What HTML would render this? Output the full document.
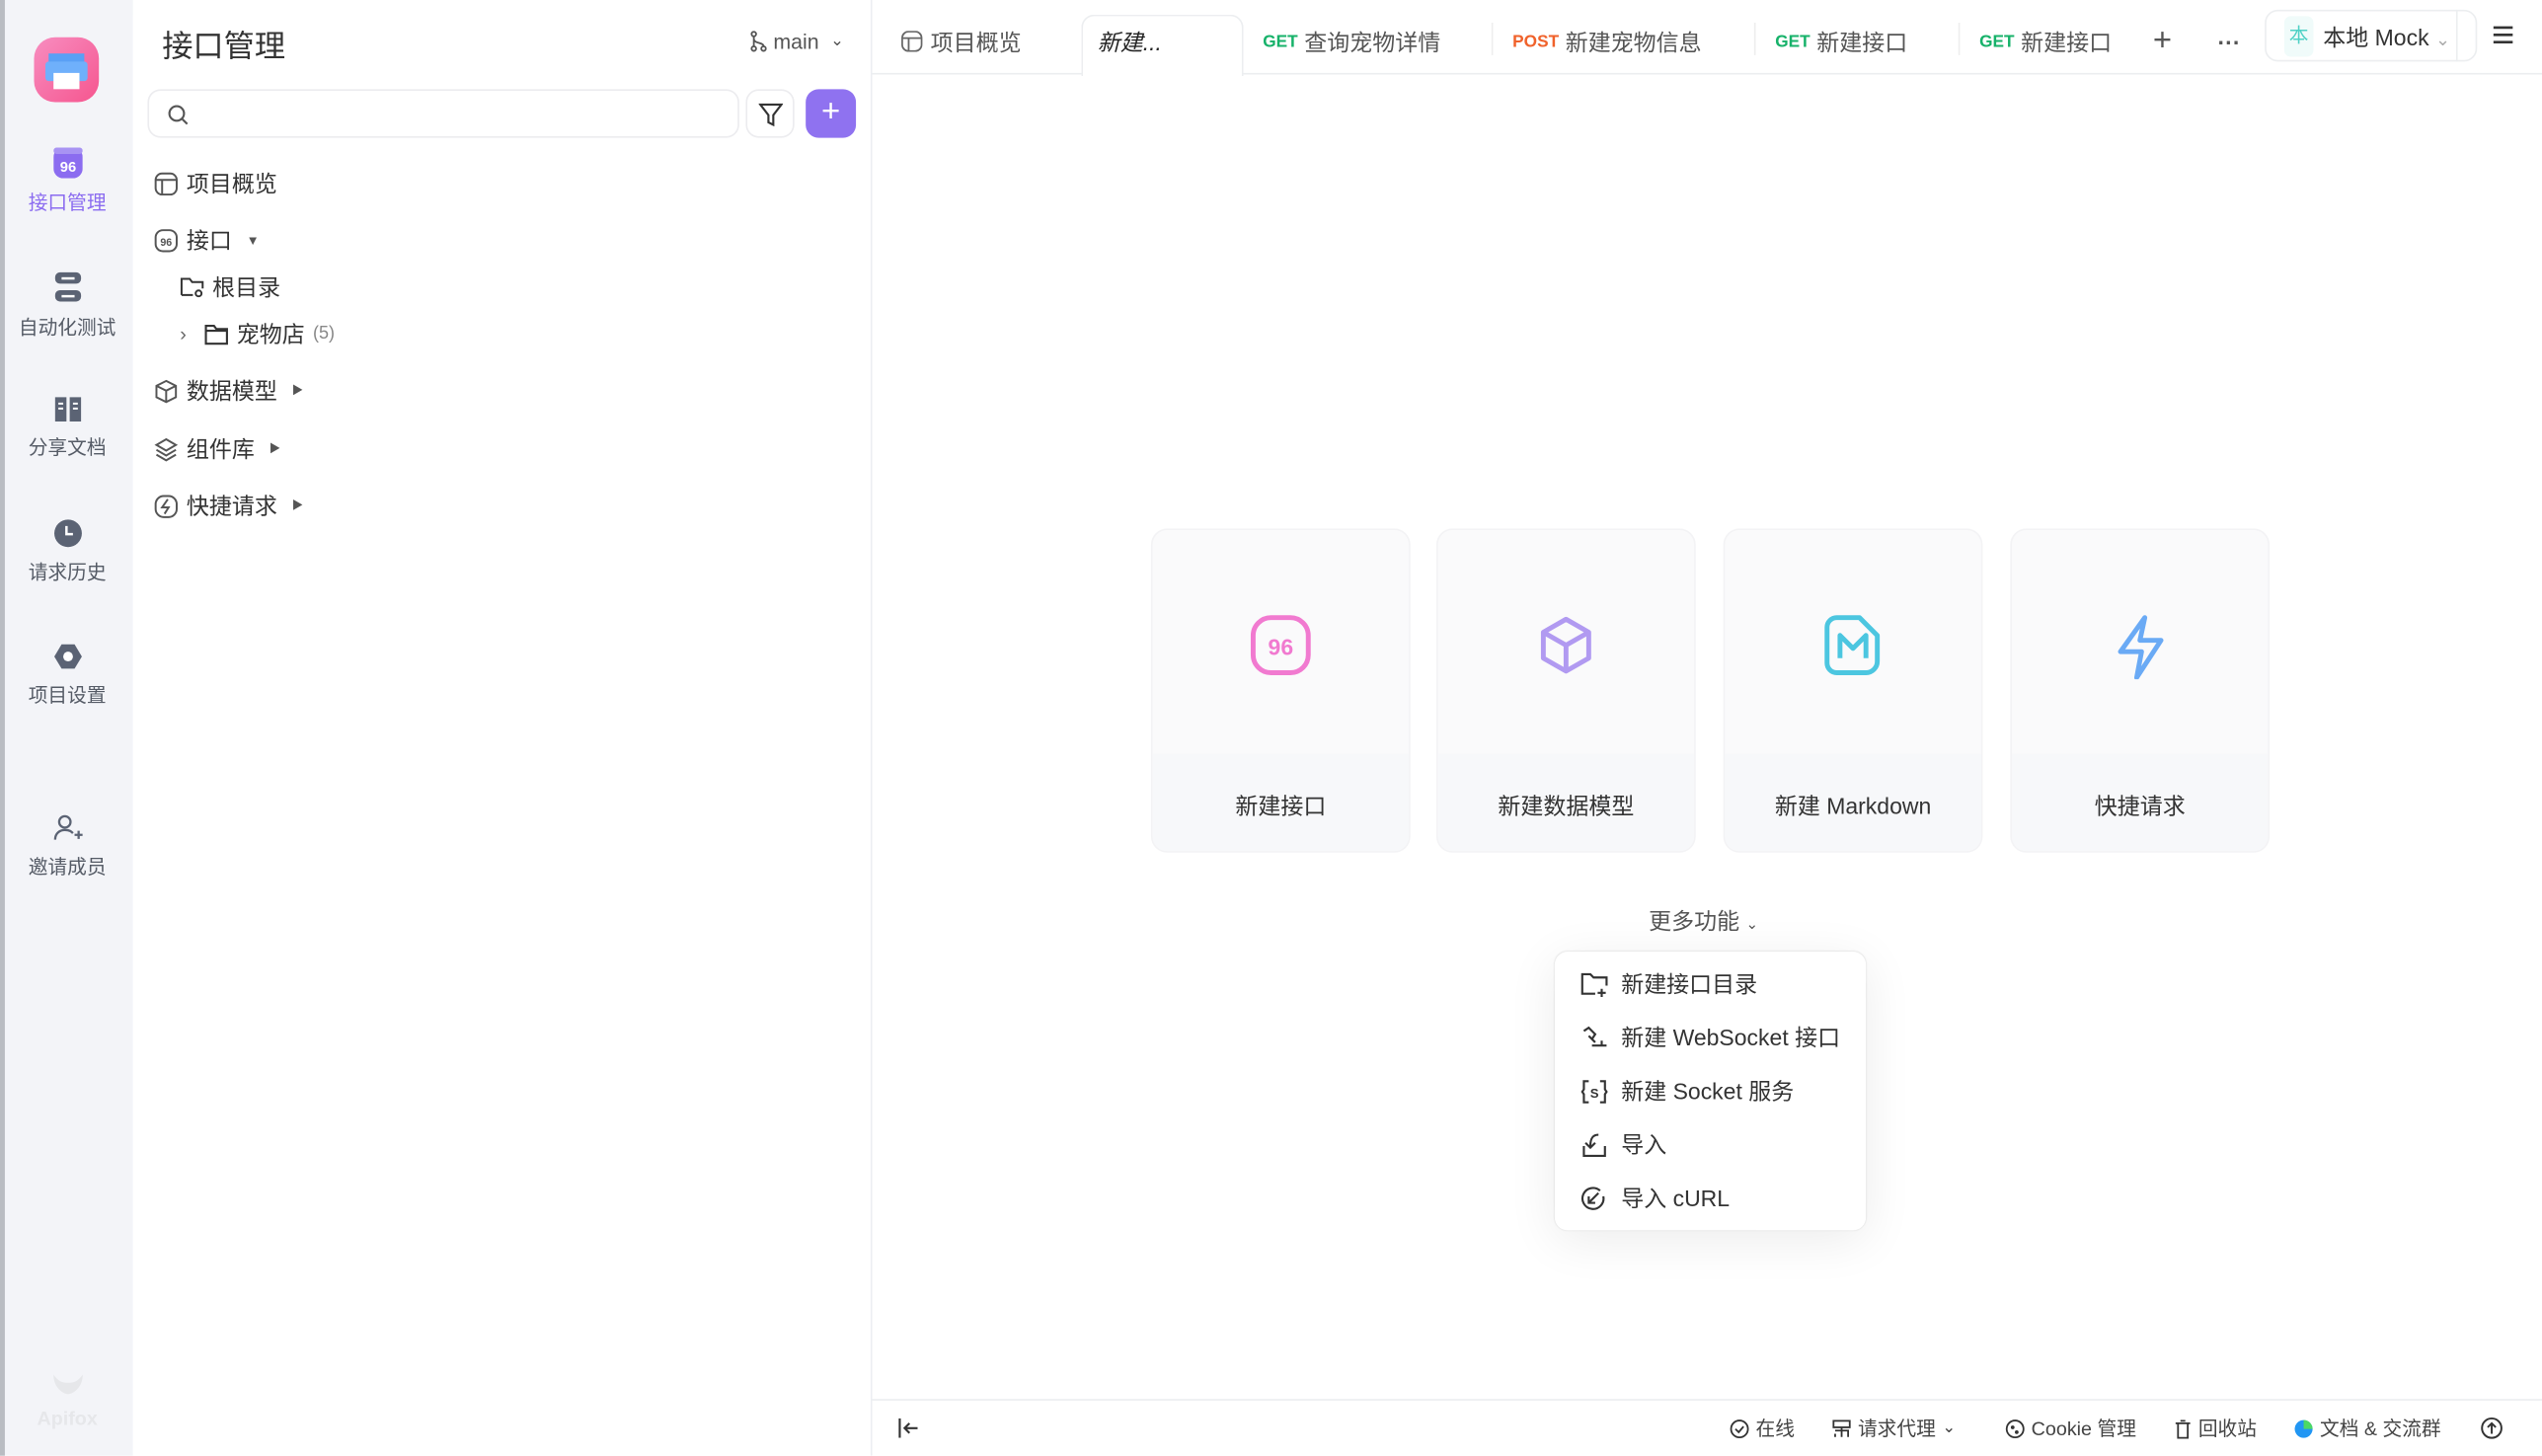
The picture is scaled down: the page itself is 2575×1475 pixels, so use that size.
<!DOCTYPE html>
<html><head><meta charset="utf-8">
<style>
*{box-sizing:border-box;margin:0;padding:0}
html,body{width:2575px;height:1474px;overflow:hidden;background:#fff}
body{font-family:"Liberation Sans","Noto Sans CJK SC",sans-serif;color:#333}
#w{position:absolute;left:0;top:0;width:1568px;height:898px;transform:scale(1.6422);transform-origin:0 0;background:#fff}
.a{position:absolute}
.rail{left:0;top:0;width:82px;height:898px;background:#f3f4f8;border-left:3px solid #b9bcc2}
.ri{position:absolute;left:-1px;width:79px;text-align:center;font-size:12px;color:#555b66}
.ri svg{display:block;margin:0 auto 6px}
.side{left:82px;top:0;width:456px;height:898px;background:#fff;border-radius:10px 0 0 0;border-right:1px solid #eceef2}
.tree{position:absolute;left:13px;font-size:14px;color:#333;display:flex;align-items:center;gap:5px}
.tree svg{flex:none}
.tab{position:absolute;top:0;height:51px;display:flex;align-items:center;font-size:14px;color:#555}
.m{font-size:10.5px;font-weight:bold;margin-right:4px}
.g{color:#17b26a}.p{color:#f0622b}
.sep{position:absolute;top:14px;width:1px;height:20px;background:#eee}
.card{position:absolute;top:326px;width:160px;height:200px;border-radius:10px;background:#fafafb;border:1px solid #f3f3f5;overflow:hidden}
.card .b{position:absolute;left:0;right:0;bottom:0;height:60px;background:#f7f8fa;text-align:center;line-height:64px;font-size:14px;color:#333}
.card svg{position:absolute;left:60px;top:52px}
.dd{left:959px;top:587px;width:192px;height:172px;background:#fff;border-radius:8px;box-shadow:0 6px 30px rgba(0,0,0,.08),0 0 1px rgba(0,0,0,.12)}
.di{position:absolute;left:16px;display:flex;align-items:center;gap:8px;font-size:14px;color:#333}
.bot{position:absolute;top:881px;transform:translateY(-50%);font-size:12px;color:#444;display:flex;align-items:center;gap:4px}
</style></head><body><div id="w">

<div class="a rail">
 <div class="a" style="left:18px;top:23px;width:40px;height:40px;border-radius:13px;background:linear-gradient(135deg,#f78dc0,#f6568f);overflow:hidden">
  <div class="a" style="left:9px;top:10px;width:22px;height:6px;background:#5aa0f5"></div>
  <div class="a" style="left:7px;top:15px;width:26px;height:12px;background:#6fb0fb;border-radius:2px"></div>
  <div class="a" style="left:12px;top:22px;width:16px;height:10px;background:#fff"></div>
 </div>
 <div class="ri" style="top:91px;color:#8b6cf0"><svg width="18" height="19" viewBox="0 0 18 19"><rect x="0" y="0" width="18" height="19" rx="6" fill="#8b6cf0"/><rect x="0" y="0" width="18" height="4" rx="2" fill="#a893f3"/><text x="9" y="15" font-size="9" font-weight="bold" text-anchor="middle" fill="#fff" font-family="Liberation Sans">96</text></svg>接口管理</div>
 <div class="ri" style="top:167px"><svg width="18" height="20" viewBox="0 0 18 20"><rect x="1" y="1" width="16" height="7" rx="3" fill="#5b6374"/><rect x="1" y="12" width="16" height="7" rx="3" fill="#5b6374"/><rect x="5" y="4" width="8" height="1.5" fill="#fff"/><rect x="5" y="15" width="8" height="1.5" fill="#fff"/></svg>自动化测试</div>
 <div class="ri" style="top:243px"><svg width="18" height="18" viewBox="0 0 18 18"><path d="M1 2h7v15H1zM10 2h7v15h-7z" fill="#5b6374"/><path d="M3 6h3M3 9h3M12 6h3M12 9h3" stroke="#fff" stroke-width="1.2"/></svg>分享文档</div>
 <div class="ri" style="top:320px"><svg width="18" height="18" viewBox="0 0 18 18"><circle cx="9" cy="9" r="8.5" fill="#5b6374"/><path d="M8 4.5v5h4" stroke="#fff" stroke-width="1.5" fill="none"/></svg>请求历史</div>
 <div class="ri" style="top:396px"><svg width="18" height="18" viewBox="0 0 18 18"><path d="M5 1.5h8l4.5 7.5-4.5 7.5H5L.5 9z" fill="#5b6374"/><circle cx="9" cy="9" r="3" fill="#fff"/></svg>项目设置</div>
 <div class="ri" style="top:502px"><svg width="18" height="18" viewBox="0 0 18 18" fill="none" stroke="#5b6374" stroke-width="1.4"><circle cx="7" cy="5" r="3.5"/><path d="M1 16c0-4 3-6 6-6s4 1 5 2M13 13h5M15.5 10.5v5"/></svg>邀请成员</div>
 <div class="ri" style="top:846px;color:#e6e7ea;font-weight:bold;font-size:12px"><svg width="22" height="16" viewBox="0 0 22 16"><path d="M2 2c0 8 6 12 9 12s9-4 9-12c-3 4-5 5-9 5S5 6 2 2z" fill="#e6e7ea"/></svg>Apifox</div>
</div>

<div class="a side">
 <div class="a" style="left:18px;top:14px;font-size:19px;color:#333">接口管理</div>
 <div class="a" style="left:381px;top:18px;font-size:13px;color:#555;display:flex;align-items:center;gap:4px"><svg width="10" height="13" viewBox="0 0 10 13" fill="none" stroke="#555" stroke-width="1.1"><circle cx="2" cy="2" r="1.4"/><circle cx="2" cy="11" r="1.4"/><circle cx="8" cy="11" r="1.4"/><path d="M2 3.5v6M2 5c0 3 6 2 6 4.5"/></svg>main <span style="font-size:10px;margin-left:3px">&#8964;</span></div>
 <div class="a" style="left:9px;top:55px;width:365px;height:30px;border:1px solid #ececef;border-radius:8px"><svg class="a" style="left:11px;top:8px" width="14" height="14" viewBox="0 0 14 14" fill="none" stroke="#555" stroke-width="1.3"><circle cx="6" cy="6" r="4.5"/><path d="M9.5 9.5l3 3"/></svg></div>
 <div class="a" style="left:378px;top:55px;width:30px;height:30px;border:1px solid #ececef;border-radius:8px"><svg class="a" style="left:7px;top:7px" width="15" height="15" viewBox="0 0 15 15" fill="none" stroke="#333" stroke-width="1.3"><path d="M1 1.5h13L9 8v6l-3-1.5V8z"/></svg></div>
 <div class="a" style="left:415px;top:55px;width:31px;height:30px;background:#8f72f0;border-radius:8px;color:#fff;font-size:20px;text-align:center;line-height:29px">+</div>

 <div class="tree" style="top:103px"><svg width="15" height="15" viewBox="0 0 15 15" fill="none" stroke="#555" stroke-width="1.2"><rect x="1" y="1" width="13" height="13" rx="4"/><path d="M1 5h13M5 5v9"/></svg>项目概览</div>
 <div class="tree" style="top:138px"><svg width="15" height="15" viewBox="0 0 15 15" fill="none" stroke="#555" stroke-width="1.2"><rect x="1" y="1" width="13" height="13" rx="4.5"/><text x="7.5" y="10.5" font-size="6.5" text-anchor="middle" fill="#555" stroke="none" font-weight="bold" font-family="Liberation Sans">96</text></svg>接口 <span style="font-size:8px;color:#555;margin-left:4px">▼</span></div>
 <div class="tree" style="top:167px;left:29px"><svg width="15" height="14" viewBox="0 0 15 14" fill="none" stroke="#333" stroke-width="1.2"><path d="M1 12V2h5l1.5 2H14v4M1 12h7"/><circle cx="11.5" cy="11" r="1.8"/></svg><span>根目录</span></div>
 <div class="tree" style="top:196px;left:29px"><span style="color:#666;font-size:12px;width:10px">›</span><svg width="15" height="13" viewBox="0 0 15 13" fill="none" stroke="#333" stroke-width="1.3"><path d="M1 12V1h5l1.5 2H14v9zM1 4h13"/></svg>宠物店 <span style="font-size:11px;color:#888">(5)</span></div>
 <div class="tree" style="top:231px"><svg width="15" height="15" viewBox="0 0 15 15" fill="none" stroke="#555" stroke-width="1.2"><path d="M7.5 1l6 3v7l-6 3-6-3V4zM1.5 4l6 3 6-3M7.5 7v7"/></svg>数据模型 <span style="font-size:7px;color:#555;margin-left:4px">▶</span></div>
 <div class="tree" style="top:267px"><svg width="15" height="15" viewBox="0 0 15 15" fill="none" stroke="#555" stroke-width="1.2"><path d="M7.5 1l6 3.5-6 3.5-6-3.5zM1.5 7.5l6 3.5 6-3.5M1.5 10.5l6 3.5 6-3.5"/></svg>组件库 <span style="font-size:7px;color:#555;margin-left:4px">▶</span></div>
 <div class="tree" style="top:302px"><svg width="15" height="15" viewBox="0 0 15 15" fill="none" stroke="#555" stroke-width="1.2"><rect x="1" y="1" width="13" height="13" rx="5"/><path d="M8.5 3L5 8h4l-2.5 4"/></svg>快捷请求 <span style="font-size:7px;color:#555;margin-left:4px">▶</span></div>
</div>

<!-- tabs -->
<div class="a" style="left:538px;top:45px;width:1030px;height:1px;background:#eceef0"></div>
<div class="tab" style="left:556px"><svg width="13" height="13" viewBox="0 0 13 13" fill="none" stroke="#666" stroke-width="1.1" style="margin-right:5px"><rect x=".5" y=".5" width="12" height="12" rx="4"/><path d="M.5 4.5h12M4.5 4.5v8"/></svg>项目概览</div>
<div class="a" style="left:667px;top:9px;width:100px;height:38px;background:#fff;border:1px solid #eceef0;border-bottom:none;border-radius:8px 8px 0 0"></div>
<div class="tab" style="left:677px;font-style:italic;color:#222">新建...</div>
<div class="tab" style="left:779px"><span class="m g">GET</span>查询宠物详情</div>
<div class="sep" style="left:920px"></div>
<div class="tab" style="left:933px"><span class="m p">POST</span>新建宠物信息</div>
<div class="sep" style="left:1082px"></div>
<div class="tab" style="left:1095px"><span class="m g">GET</span>新建接口</div>
<div class="sep" style="left:1208px"></div>
<div class="tab" style="left:1221px"><span class="m g">GET</span>新建接口</div>
<div class="tab" style="left:1328px;font-size:20px;color:#555">+</div>
<div class="tab" style="left:1368px;font-size:14px;color:#555;font-weight:bold">···</div>
<div class="a" style="left:1397px;top:6px;width:131px;height:32px;border:1px solid #eceef0;border-radius:8px"></div>
<div class="a" style="left:1409px;top:10px;width:18px;height:25px;background:#f0fbfa;border-radius:4px;color:#4fd1c5;font-size:12px;text-align:center;line-height:24px">本</div>
<div class="a" style="left:1433px;top:13px;font-size:14px;color:#333">本地 Mock <span style="color:#aaa;font-size:11px">&#8964;</span></div>
<div class="a" style="left:1515px;top:6px;width:1px;height:32px;background:#eceef0"></div>
<svg class="a" style="left:1538px;top:16px" width="12" height="11" viewBox="0 0 12 11" stroke="#333" stroke-width="1.6"><path d="M0 1h12M0 5.5h12M0 10h12"/></svg>

<!-- cards -->
<div class="card" style="left:710px"><svg width="38" height="38" viewBox="0 0 38 38" fill="none" stroke="#f17ad0" stroke-width="3"><rect x="2" y="2" width="34" height="34" rx="11"/><text x="19" y="25" font-size="14" font-weight="bold" text-anchor="middle" fill="#f17ad0" stroke="none" font-family="Liberation Sans">96</text></svg><div class="b">新建接口</div></div>
<div class="card" style="left:886px"><svg width="38" height="38" viewBox="0 0 38 38" fill="none" stroke="#b19af1" stroke-width="3" stroke-linejoin="round"><path d="M19 3l14 8v16l-14 8-14-8V11zM5 11l14 8 14-8M19 19v16"/></svg><div class="b">新建数据模型</div></div>
<div class="card" style="left:1063px"><svg width="38" height="38" viewBox="0 0 38 38" fill="none" stroke="#4cc6e0" stroke-width="3" stroke-linejoin="round"><path d="M9 2h14l11 11v16a7 7 0 0 1-7 7H9a6 6 0 0 1-6-6V8a6 6 0 0 1 6-6z"/><path d="M11 27V13l8 8 8-8v14"/></svg><div class="b">新建 Markdown</div></div>
<div class="card" style="left:1240px"><svg width="38" height="40" viewBox="0 0 38 40" fill="none" stroke="#6aaaf5" stroke-width="3" stroke-linejoin="round"><path d="M22 2L7 23h13l-3 16 15-23H19z"/></svg><div class="b">快捷请求</div></div>

<div class="a" style="left:1017px;top:558px;font-size:14px;color:#555">更多功能 <span style="font-size:9px">&#8964;</span></div>

<div class="a dd">
 <div class="di" style="top:10px"><svg width="17" height="15" viewBox="0 0 17 15" fill="none" stroke="#333" stroke-width="1.3"><path d="M9 13H1V1h5l2 2h8v5M13 10v5M10.5 12.5h5"/></svg>新建接口目录</div>
 <div class="di" style="top:43px"><svg width="17" height="15" viewBox="0 0 17 15" fill="none" stroke="#333" stroke-width="1.3"><path d="M2 3l3-2 4 4-2 3M5 6l4 4M7 12h9M13 9v3"/></svg>新建 WebSocket 接口</div>
 <div class="di" style="top:76px"><svg width="17" height="15" viewBox="0 0 17 15" fill="none" stroke="#333" stroke-width="1.3"><path d="M5 1H2v5l-1 1.5 1 1.5v5h3M12 1h3v5l1 1.5-1 1.5v5h-3"/><text x="8.5" y="11" font-size="8" text-anchor="middle" fill="#333" stroke="none" font-weight="bold" font-family="Liberation Sans">S</text></svg>新建 Socket 服务</div>
 <div class="di" style="top:109px"><svg width="17" height="15" viewBox="0 0 17 15" fill="none" stroke="#333" stroke-width="1.3"><path d="M2 8v6h13V8M11 1C7 1 6 4 6 8M3 6l3 3 3-3"/></svg>导入</div>
 <div class="di" style="top:142px"><svg width="17" height="15" viewBox="0 0 17 15" fill="none" stroke="#333" stroke-width="1.3"><path d="M12 2.5A6.5 6.5 0 1 0 14 6"/><path d="M11 4L5 10M5 6v4h4"/></svg>导入 cURL</div>
</div>

<!-- bottom -->
<div class="a" style="left:538px;top:863px;width:1030px;height:1px;background:#eceef0"></div>
<div class="bot" style="left:554px"><svg width="13" height="12" viewBox="0 0 13 12" fill="none" stroke="#333" stroke-width="1.3"><path d="M1 0v12M12 6H4M7 3L4 6l3 3"/></svg></div>
<div class="bot" style="left:1067px"><svg width="12" height="12" viewBox="0 0 12 12" fill="none" stroke="#333" stroke-width="1.1"><circle cx="6" cy="6" r="5.2"/><path d="M3.5 6l2 2 3-3.5"/></svg>在线</div>
<div class="bot" style="left:1130px"><svg width="12" height="12" viewBox="0 0 12 12" fill="none" stroke="#333" stroke-width="1.1"><rect x="1" y="1" width="10" height="4"/><path d="M6 5v2M2 7h8v2M2 9v2M10 9v2M6 7v4"/></svg>请求代理 <span style="font-size:10px">&#8964;</span></div>
<div class="bot" style="left:1237px"><svg width="12" height="12" viewBox="0 0 12 12" fill="none" stroke="#333" stroke-width="1.1"><circle cx="6" cy="6" r="5.2"/><circle cx="4.5" cy="5" r=".6" fill="#333"/><circle cx="7" cy="8" r=".6" fill="#333"/></svg>Cookie 管理</div>
<div class="bot" style="left:1341px"><svg width="11" height="12" viewBox="0 0 11 12" fill="none" stroke="#333" stroke-width="1.1"><path d="M1 2.5h9M4 1h3M2.5 2.5v9h6v-9"/></svg>回收站</div>
<div class="bot" style="left:1415px"><svg width="12" height="12" viewBox="0 0 12 12"><circle cx="6" cy="6" r="5.5" fill="#2196f3"/><path d="M6 .5A5.5 5.5 0 0 1 11.5 6H6z" fill="#4cd964"/></svg>文档 &amp; 交流群</div>
<div class="bot" style="left:1530px"><svg width="14" height="14" viewBox="0 0 14 14" fill="none" stroke="#333" stroke-width="1.2"><circle cx="7" cy="7" r="6"/><path d="M7 10.5V4M4.5 6.5L7 4l2.5 2.5"/></svg></div>

</div></body></html>
